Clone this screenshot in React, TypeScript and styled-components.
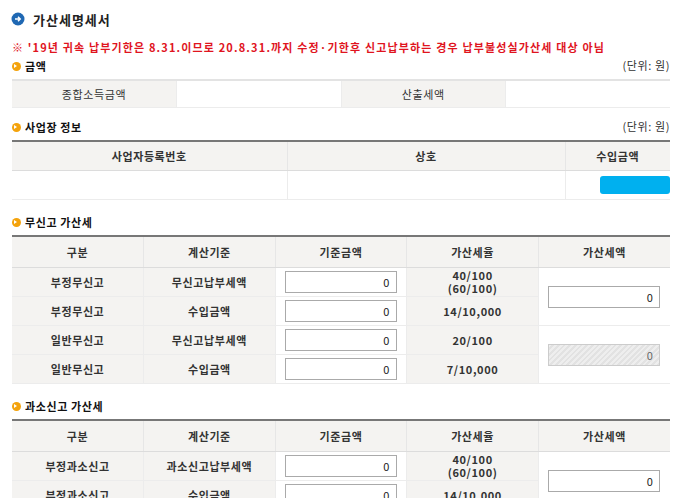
import React from "react";
import styled, { createGlobalStyle } from "styled-components";

const Global = createGlobalStyle`
  body { margin: 0; background: #fff; font-family: "Noto Sans CJK KR", "Noto Sans", sans-serif; font-size: 11px; color: #333; letter-spacing: 0.6px; }
`;

const Page = styled.div`
  padding: 8px 8px 0 12px;
  width: 658px;
`;
const TitleRow = styled.div`
  display: flex; align-items: center; gap: 8px;
  height: 22px; margin-left: -1px;
  font-size: 13px; font-weight: 700; color: #222; letter-spacing: 1px;
`;
const Notice = styled.div`
  margin-top: 7px; color: #e0141e; font-weight: 700; font-size: 11px; height: 20px; line-height: 20px; letter-spacing: 1.15px;
`;
const SectionHead = styled.div`
  display: flex; justify-content: space-between; align-items: center;
  height: 18px; margin-top: ${p => p.$mt ?? 0}px; margin-bottom: 4px;
`;
const SectionTitle = styled.div`
  display: flex; align-items: center; gap: 4px; font-weight: 700; color: #111; font-size: 11px;
`;
const Unit = styled.div` color: #333; font-size: 11px; align-self: flex-start; `;
const Dot = styled.span`
  width: 9px; height: 9px; border-radius: 50%; background: #f4a30c; display: inline-block; position: relative;
  &::after { content: ""; position: absolute; left: 2px; top: 2.5px; border-left: 3px solid #fff; border-top: 2px solid transparent; border-bottom: 2px solid transparent; }
`;
const Table = styled.table`
  width: 100%; border-collapse: collapse; table-layout: fixed;
  border-top: 2px solid ${p => (p.$plain ? "#e3e3e3" : "#777")};
  border-bottom: 1px solid #dedede;
`;
const Th = styled.th`
  background: #f4f3f1; font-weight: 700; color: #333; height: ${p => p.$h ?? 28}px;
  border-bottom: 1px solid #dcdcdc; border-left: 1px solid #e6e6e6; padding: 0;
  &:first-child { border-left: none; }
`;
const Td = styled.td`
  background: ${p => (p.$grey ? "#f4f3f1" : "#fff")}; height: ${p => p.$h ?? 28}px; text-align: center;
  border-bottom: 1px solid #ececec; border-left: 1px solid #ececec; padding: 0; font-weight: ${p => (p.$bold ? 700 : 400)};
  color: #333; line-height: 13px;
  &:first-child { border-left: none; }
`;
const Input = styled.div`
  margin: 0 auto; width: ${p => p.$w ?? 104}px; height: 20px; border: 1px solid #aaa;
  background: ${p => (p.$disabled ? "repeating-linear-gradient(135deg,#eee 0 2px,#e2e2e2 2px 4px)" : "#fff")};
  border-color: ${p => (p.$disabled ? "#ccc" : "#aaa")};
  text-align: right; padding-right: 6px; line-height: 20px; color: ${p => (p.$disabled ? "#666" : "#222")};
`;
const BlueBtn = styled.div`
  width: 70px; height: 18px; background: #00b0ef; border-radius: 3px; margin-left: auto; margin-right: 0;
`;

const Circle = () => (
  <svg width="14" height="14" viewBox="0 0 14 14">
    <circle cx="7" cy="7" r="6.5" fill="#1f68b3" />
    <path d="M4 7h5M7 4.8L9.2 7 7 9.2" stroke="#fff" strokeWidth="1.5" fill="none" />
  </svg>
);

const rateHead = (
  <tr>
    <Th $h={30}>구분</Th><Th $h={30}>계산기준</Th><Th $h={30}>기준금액</Th><Th $h={30}>가산세율</Th><Th $h={30}>가산세액</Th>
  </tr>
);

export default function App() {
  return (
    <Page>
      <Global />
      <TitleRow><Circle />가산세명세서</TitleRow>
      <Notice>※ '19년 귀속 납부기한은 8.31.이므로 20.8.31.까지 수정·기한후 신고납부하는 경우 납부불성실가산세 대상 아님</Notice>
      <SectionHead $mt={0}><SectionTitle><Dot />금액</SectionTitle><Unit>(단위: 원)</Unit></SectionHead>
      <Table $plain>
        <tbody>
          <tr>
            <Td $grey $h={26}>종합소득금액</Td><Td $h={26} /><Td $grey $h={26}>산출세액</Td><Td $h={26} />
          </tr>
        </tbody>
      </Table>
      <SectionHead $mt={10}><SectionTitle><Dot />사업장 정보</SectionTitle><Unit>(단위: 원)</Unit></SectionHead>
      <Table>
        <colgroup><col style={{ width: 275 }} /><col style={{ width: 278 }} /><col /></colgroup>
        <tbody>
          <tr><Th>사업자등록번호</Th><Th>상호</Th><Th>수입금액</Th></tr>
          <tr><Td $h={28} /><Td $h={28} /><Td $h={28}><BlueBtn /></Td></tr>
        </tbody>
      </Table>
      <SectionHead $mt={13}><SectionTitle><Dot />무신고 가산세</SectionTitle></SectionHead>
      <Table>
        <tbody>
          {rateHead}
          <tr><Td $grey $bold>부정무신고</Td><Td $grey $bold>무신고납부세액</Td><Td><Input>0</Input></Td><Td $grey $bold>40/100<br />(60/100)</Td><Td rowSpan={2}><Input $w={104}>0</Input></Td></tr>
          <tr><Td $grey $bold>부정무신고</Td><Td $grey $bold>수입금액</Td><Td><Input>0</Input></Td><Td $grey $bold>14/10,000</Td></tr>
          <tr><Td $grey $bold>일반무신고</Td><Td $grey $bold>무신고납부세액</Td><Td><Input>0</Input></Td><Td $grey $bold>20/100</Td><Td rowSpan={2}><Input $w={104} $disabled>0</Input></Td></tr>
          <tr><Td $grey $bold>일반무신고</Td><Td $grey $bold>수입금액</Td><Td><Input>0</Input></Td><Td $grey $bold>7/10,000</Td></tr>
        </tbody>
      </Table>
      <SectionHead $mt={13}><SectionTitle><Dot />과소신고 가산세</SectionTitle></SectionHead>
      <Table>
        <tbody>
          {rateHead}
          <tr><Td $grey $bold>부정과소신고</Td><Td $grey $bold>과소신고납부세액</Td><Td><Input>0</Input></Td><Td $grey $bold>40/100<br />(60/100)</Td><Td rowSpan={2}><Input $w={104}>0</Input></Td></tr>
          <tr><Td $grey $bold>부정과소신고</Td><Td $grey $bold>수입금액</Td><Td><Input>0</Input></Td><Td $grey $bold>14/10,000</Td></tr>
        </tbody>
      </Table>
    </Page>
  );
}
